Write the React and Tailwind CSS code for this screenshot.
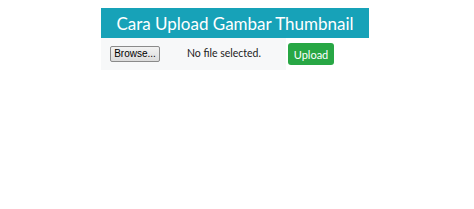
export default function App() {
  return (
    <div className="w-[474px] h-[209px] bg-white pt-[8px] pl-[101px]" style={{ fontFamily: 'Lato, "Open Sans", sans-serif' }}>
      <div className="w-[268px]">
        <div className="h-[30px] bg-[#17a2b8] flex items-center justify-center">
          <h1 className="text-white text-[17px] leading-none whitespace-nowrap">Cara Upload Gambar Thumbnail</h1>
        </div>
        <div className="flex items-center h-[32px]">
          <div className="w-[185px] h-full bg-[#f7f8f9] flex items-center pl-[9px]">
            <span className="w-[50px] h-[16px] flex items-center justify-center border border-[#8a8a8a] rounded-[2px] bg-gradient-to-b from-[#f2f2f2] to-[#dcdcdc] text-[10px] text-black leading-none" style={{ fontFamily: '"Liberation Sans", Arial, sans-serif' }}>Browse...</span>
            <span className="ml-[27px] text-[10.5px] text-[#222] whitespace-nowrap">No file selected.</span>
          </div>
          <button className="ml-[2px] w-[46px] h-[22px] rounded-[3px] bg-[#28a745] text-white text-[11px] leading-none">Upload</button>
        </div>
      </div>
    </div>
  );
}
